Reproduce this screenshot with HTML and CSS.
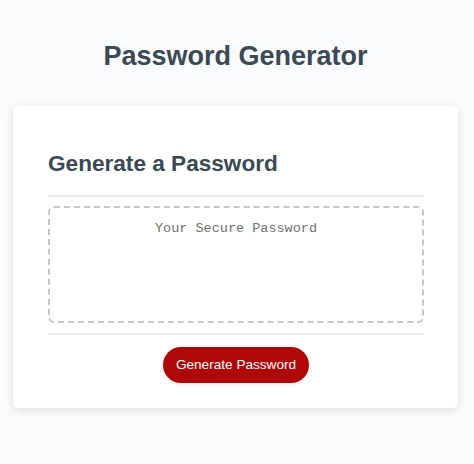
FILE: index.html
```html
<!DOCTYPE html>
<html lang="en">
<head>
<meta charset="utf-8">
<title>Password Generator</title>
<link rel="stylesheet" href="styles.css">
</head>
<body>
<div class="wrapper">
  <header class="header">
    <h1 class="title">Password Generator</h1>
  </header>
  <div class="card">
    <div class="card-header">
      <h2 class="card-title">Generate a Password</h2>
    </div>
    <div class="card-body">
      <textarea readonly class="password" placeholder="Your Secure Password" aria-label="Generated Password"></textarea>
    </div>
    <div class="card-footer">
      <button class="btn" type="button">Generate Password</button>
    </div>
  </div>
</div>
</body>
</html>
```

FILE: styles.css
```css
*, *::before, *::after {
  box-sizing: border-box;
}

html, body {
  margin: 0;
  padding: 0;
}

body {
  background-color: #f9fbfd;
  font-family: "Liberation Sans", Arial, sans-serif;
  color: #3b4954;
  height: 464px;
}

.wrapper {
  padding: 40px 16px 0 13px;
}

.header {
  text-align: center;
}

.title {
  margin: 0;
  font-size: 27px;
  line-height: 32px;
  font-weight: 700;
  color: #3b4954;
}

.card {
  margin-top: 34px;
  background-color: #fff;
  border-radius: 5px;
  box-shadow: rgba(0, 0, 0, 0.12) 0 2px 8px 0;
  padding: 44px 34px 25px 35px;
}

.card-header::after {
  content: "";
  display: block;
  height: 2px;
  background: #e7e9eb;
  margin-top: 18px;
}

.card-title {
  margin: 0;
  font-size: 22.6px;
  line-height: 27px;
  font-weight: 700;
  color: #3b4954;
}

.card-body {
  padding: 9px 0 10px;
}

.password {
  display: block;
  width: 100%;
  height: 117px;
  margin: 0;
  padding: 13px 15px 0;
  border: 2px dashed #c0c7cf;
  border-radius: 6px;
  resize: none;
  overflow: hidden;
  background: #fff;
  font-family: "Liberation Mono", "Courier New", monospace;
  font-size: 13.5px;
  text-align: center;
  outline: none;
}

.password::placeholder {
  color: #6f6f6f;
}

.card-footer {
  text-align: center;
}

.card-footer::before {
  content: "";
  display: block;
  height: 2px;
  background: #e7e9eb;
  margin-bottom: 12px;
}

.btn {
  display: inline-block;
  height: 36px;
  padding: 0 13px;
  border: none;
  border-radius: 18px;
  background-color: #af0808;
  color: #fff;
  font-family: "Liberation Sans", Arial, sans-serif;
  font-size: 13.6px;
  line-height: 36px;
  box-shadow: rgba(0, 0, 0, 0.1) 0 1px 4px 0;
  cursor: pointer;
  vertical-align: top;
}
```
